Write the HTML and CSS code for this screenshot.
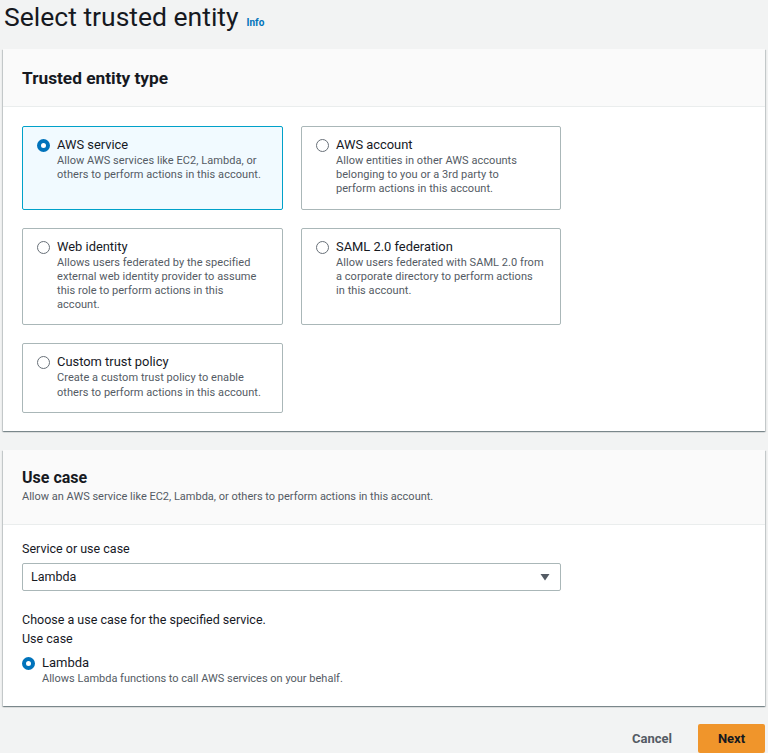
FILE: index.html
```html
<!DOCTYPE html>
<html>
<head>
<meta charset="utf-8">
<link rel="stylesheet" href="styles.css">
</head>
<body>
<div class="page">
  <div class="page-title">
    <h1>Select trusted entity</h1>
    <a class="info">Info</a>
  </div>

  <section class="panel">
    <div class="panel-head">
      <h2 class="big">Trusted entity type</h2>
    </div>
    <div class="panel-body">
      <div class="tiles">
        <div class="tile selected">
          <span class="radio on"></span>
          <div class="tile-text">
            <div class="tile-label">AWS service</div>
            <div class="tile-desc">Allow AWS services like EC2, Lambda, or<br>others to perform actions in this account.</div>
          </div>
        </div>
        <div class="tile">
          <span class="radio"></span>
          <div class="tile-text">
            <div class="tile-label">AWS account</div>
            <div class="tile-desc">Allow entities in other AWS accounts<br>belonging to you or a 3rd party to<br>perform actions in this account.</div>
          </div>
        </div>
        <div class="tile">
          <span class="radio"></span>
          <div class="tile-text">
            <div class="tile-label">Web identity</div>
            <div class="tile-desc">Allows users federated by the specified<br>external web identity provider to assume<br>this role to perform actions in this<br>account.</div>
          </div>
        </div>
        <div class="tile">
          <span class="radio"></span>
          <div class="tile-text">
            <div class="tile-label">SAML 2.0 federation</div>
            <div class="tile-desc">Allow users federated with SAML 2.0 from<br>a corporate directory to perform actions<br>in this account.</div>
          </div>
        </div>
        <div class="tile">
          <span class="radio"></span>
          <div class="tile-text">
            <div class="tile-label">Custom trust policy</div>
            <div class="tile-desc">Create a custom trust policy to enable<br>others to perform actions in this account.</div>
          </div>
        </div>
      </div>
    </div>
  </section>

  <section class="panel second">
    <div class="panel-head tall">
      <h2>Use case</h2>
      <p class="head-desc">Allow an AWS service like EC2, Lambda, or others to perform actions in this account.</p>
    </div>
    <div class="panel-body form">
      <div class="field-label">Service or use case</div>
      <div class="select">
        <span>Lambda</span>
        <svg class="caret" width="10" height="8" viewBox="0 0 10 8"><path d="M0.5 1 L9.5 1 L5 7.5 Z" fill="#545b64"/></svg>
      </div>
      <div class="hint">Choose a use case for the specified service.</div>
      <div class="field-label small-gap">Use case</div>
      <div class="option">
        <span class="radio on"></span>
        <div>
          <div class="option-label">Lambda</div>
          <div class="option-desc">Allows Lambda functions to call AWS services on your behalf.</div>
        </div>
      </div>
    </div>
  </section>

  <div class="actions">
    <button class="btn-link">Cancel</button>
    <button class="btn-primary">Next</button>
  </div>
</div>
</body>
</html>
```

FILE: styles.css
```css
* { box-sizing: border-box; }
html, body { margin: 0; padding: 0; }
body {
  background: #f2f3f3;
  font-family: Roboto, "Liberation Sans", Arial, sans-serif;
  color: #16191f;
  overflow: hidden;
}
.page {
  padding: 0 3px;
  height: 753px;
}
.page-title {
  display: flex;
  align-items: baseline;
  gap: 8px;
  height: 49px;
  padding-left: 1px;
}
.page-title h1 {
  margin: 0;
  font-size: 26.5px;
  font-weight: 400;
  line-height: 32px;
  margin-top: 1px;
  color: #16191f;
}
.info {
  font-size: 10px;
  font-weight: 700;
  color: #0073bb;
}
.panel {
  background: #fff;
  box-shadow: 0 1px 1px 0 rgba(0, 28, 36, 0.3), 1px 1px 1px 0 rgba(0, 28, 36, 0.15), -1px 1px 1px 0 rgba(0, 28, 36, 0.15);
}
.panel.second { margin-top: 19px; }
.panel-head {
  background: #fafafa;
  border-bottom: 1px solid #eaeded;
  padding: 19px 19px 18px;
}
.panel-head h2 {
  margin: 0;
  font-size: 16px;
  font-weight: 700;
  line-height: 20px;
}
.panel-head h2.big { font-size: 17.3px; }
.panel-head.tall { padding: 18px 19px 20px; }
.head-desc {
  margin: 2px 0 0;
  font-size: 11px;
  line-height: 14px;
  color: #545b64;
}
.panel-body {
  padding: 19px 19px 18px;
}
.tiles {
  display: grid;
  grid-template-columns: 261px 260px;
  column-gap: 18px;
  row-gap: 18px;
}
.tile {
  border: 1px solid #aab7b8;
  border-radius: 2px;
  padding: 9px 8px 12px 14px;
  display: flex;
  gap: 7px;
  align-items: flex-start;
}
.tile.selected {
  background: #f1faff;
  border-color: #00a1c9;
}
.radio {
  flex: none;
  width: 13px;
  height: 13px;
  border-radius: 50%;
  border: 1px solid #687078;
  background: #fff;
  margin-top: 3px;
}
.radio.on {
  border: 4px solid #0073bb;
}
.tile-label {
  font-size: 12.9px;
  line-height: 18px;
}
.tile-desc {
  font-size: 11px;
  letter-spacing: 0.05px;
  line-height: 14.2px;
  color: #545b64;
  white-space: nowrap;
}
.panel-body.form {
  padding: 16px 19px 20px;
}
.field-label {
  font-size: 12.5px;
  line-height: 16px;
}
.field-label.small-gap { margin-top: 3px; }
.select {
  margin-top: 6px;
  width: 539px;
  height: 28px;
  border: 1px solid #aab7b8;
  border-radius: 2px;
  display: flex;
  align-items: center;
  justify-content: space-between;
  padding: 0 10px 0 8px;
  font-size: 12.5px;
}
.caret { display: block; }
.hint {
  margin-top: 21px;
  font-size: 12.5px;
  line-height: 16px;
}
.option {
  margin-top: 7px;
  display: flex;
  gap: 7px;
  align-items: flex-start;
}
.option .radio { margin-top: 3px; }
.option-label {
  font-size: 13px;
  line-height: 18px;
}
.option-desc {
  font-size: 11px;
  line-height: 14px;
  color: #545b64;
}
.actions {
  display: flex;
  justify-content: flex-end;
  align-items: center;
  gap: 26px;
  margin-top: 18px;
}
button {
  font-family: inherit;
  font-weight: 700;
  font-size: 13px;
  border: none;
  cursor: pointer;
}
.btn-link {
  background: transparent;
  color: #545b64;
  padding: 0;
}
.btn-primary {
  background: #f0952b;
  color: #16191f;
  width: 67px;
  height: 29px;
  border-radius: 2px;
}
```
